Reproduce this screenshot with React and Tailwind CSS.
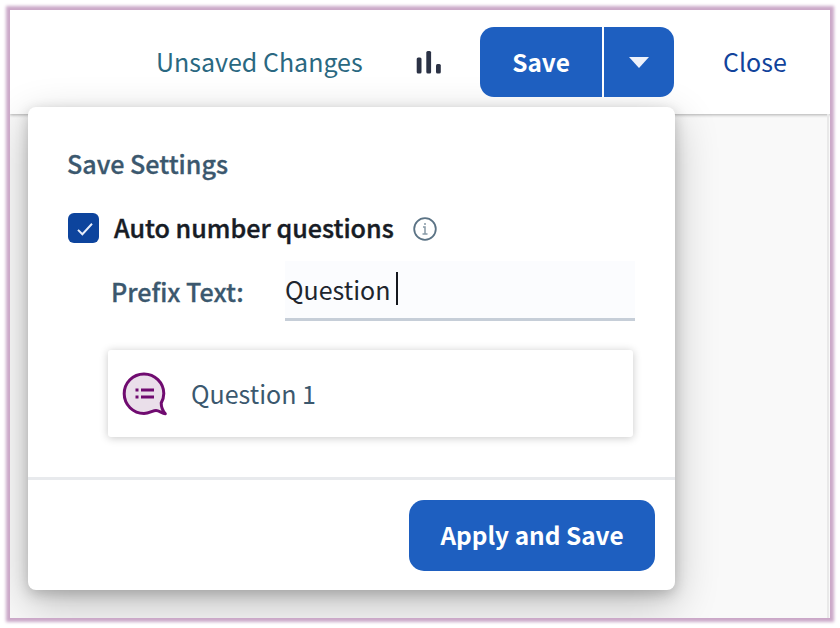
import React, { useState } from 'react';

function BarsIcon() {
    return (
        <svg width="26" height="24" viewBox="0 0 26 24" fill="#2b3245">
            <rect x="0.7" y="7.5" width="4.8" height="16" rx="1.5" />
            <rect x="10.3" y="1" width="4.8" height="22.5" rx="1.5" />
            <rect x="20" y="14" width="4.8" height="9.5" rx="1.5" />
        </svg>
    );
}

function QuestionIcon() {
    return (
        <svg width="46" height="46" viewBox="0 0 46 46" fill="none">
            <path
                d="M41.8 22.5 A19.8 19.8 0 1 0 22 42.5 C27 42.5 31 39.5 34 39.5 C37 39.5 40 42.3 43.3 42.8 C40.5 39.5 39.2 36 39.2 32 C40.8 29 41.8 26 41.8 22.5Z"
                fill="#eadfea"
                stroke="#700b70"
                strokeWidth="3"
                strokeLinejoin="round"
            />
            <path d="M13.5 19h3M19 19h13M13.5 26h3M19 26h13" stroke="#700b70" strokeWidth="3" />
        </svg>
    );
}

function SaveMenu() {
    const [autoNumber, setAutoNumber] = useState(true);

    return (
        <div className="absolute left-[18px] top-[97px] w-[647px] h-[483px] rounded-[8px] bg-white shadow-[0_14px_44px_rgba(0,0,0,0.24),0_4px_14px_rgba(0,0,0,0.2)]">
            <div className="h-[373px] border-b-3 border-[#e8eaed] pl-[40px] pt-[38px]">
                <h2 className="-ml-[1px] font-medium text-[25.1px] text-[#3b586e] [-webkit-text-stroke:0.3px]">Save Settings</h2>
                <div className="flex items-center h-[36px] mt-[28px]">
                    <button
                        onClick={() => setAutoNumber(!autoNumber)}
                        className="flex items-center justify-center w-[31px] h-[30px] mt-[2px] rounded-[6px] bg-[#0d449d]"
                    >
                        {autoNumber && (
                            <svg className="ml-[2px] mt-[2px]" width="18" height="14" viewBox="0 0 20 16" fill="none" stroke="#e8eefb" strokeWidth="2.2">
                                <path d="M2 9l5 5L18 2" />
                            </svg>
                        )}
                    </button>
                    <span className="ml-[15px] w-[299px] font-medium text-[25.1px] text-[#171c25] [-webkit-text-stroke:0.4px]">Auto number questions</span>
                    <svg className="mt-[3px]" width="24" height="24" viewBox="0 0 24 24" fill="none" stroke="#5b7385" strokeWidth="1.8">
                        <circle cx="12" cy="12" r="10.8" />
                        <path d="M10 10h2v7M9.5 17h5M12 6v2" stroke="#8799a6" strokeWidth="1.5" />
                    </svg>
                </div>
                <div className="flex mt-[16px] h-[60px] pl-[43px]">
                    <label className="w-[174px] pt-[12px] font-medium text-[25.1px] text-[#3b586e] [-webkit-text-stroke:0.3px]">Prefix Text:</label>
                    <div className="flex w-[350px] h-[60px] pt-[10px] bg-[#fbfcfe] border-b-3 border-[#c6ced8] text-[#20252d]">
                        <span className="w-[111px]">Question</span>
                        <span className="w-[2px] h-[33px] mt-[1px] bg-[#15181e]" />
                    </div>
                </div>
                <div className="flex items-center mt-[29px] ml-[40px] w-[525px] h-[87px] pl-[14px] rounded-[3px] bg-white text-[#3b586e] shadow-[0_1px_8px_rgba(0,0,0,0.22)]">
                    <QuestionIcon />
                    <span className="ml-[23px] -mt-[2px]">Question 1</span>
                </div>
            </div>
            <div className="flex justify-end pt-[20px] pr-[20px]">
                <button className="w-[246px] h-[71px] pb-[1px] rounded-[15px] bg-[#1e5fc0] text-white text-[24.4px] font-bold">Apply and Save</button>
            </div>
        </div>
    );
}

export default function App() {
    return (
        <div className="w-[840px] h-[628px] bg-white p-[10px] pb-0 font-['Noto_Sans_CJK_SC','Open_Sans',sans-serif] text-[25px] leading-[36px] whitespace-nowrap">
            <div className="w-[820px] h-[608px] shadow-[0_0_3px_4px_#cba8c8]">
                <div className="relative flex flex-col h-full bg-[#f9f9f9] overflow-hidden">
                    <header className="h-[104px] shrink-0 bg-white shadow-[0_1px_3px_rgba(0,0,0,0.3)]">
                        <div className="relative z-10 flex items-center h-[97px] pt-[7px] pl-[146px]">
                            <span className="w-[260px] -mt-[2px] text-[#2a6881]">Unsaved Changes</span>
                            <BarsIcon />
                            <div className="flex ml-[38px] h-[70px] w-[194px] rounded-[14px] overflow-hidden gap-[2px] text-white">
                                <button className="w-[122px] bg-[#1e5fc0] text-[24.4px] font-bold">Save</button>
                                <button className="flex-1 flex items-center justify-center bg-[#1e5fc0]">
                                    <svg width="20" height="11" viewBox="0 0 20 11"><path d="M0 0h20L10 11z" fill="#eef2fb" /></svg>
                                </button>
                            </div>
                            <a className="ml-[49px] -mt-[2px] text-[#11439b]">Close</a>
                        </div>
                    </header>
                    <div className="flex-1 mr-[1px] border-r-2 border-[#e9e9e9]" />
                    <SaveMenu />
                </div>
            </div>
        </div>
    );
}
